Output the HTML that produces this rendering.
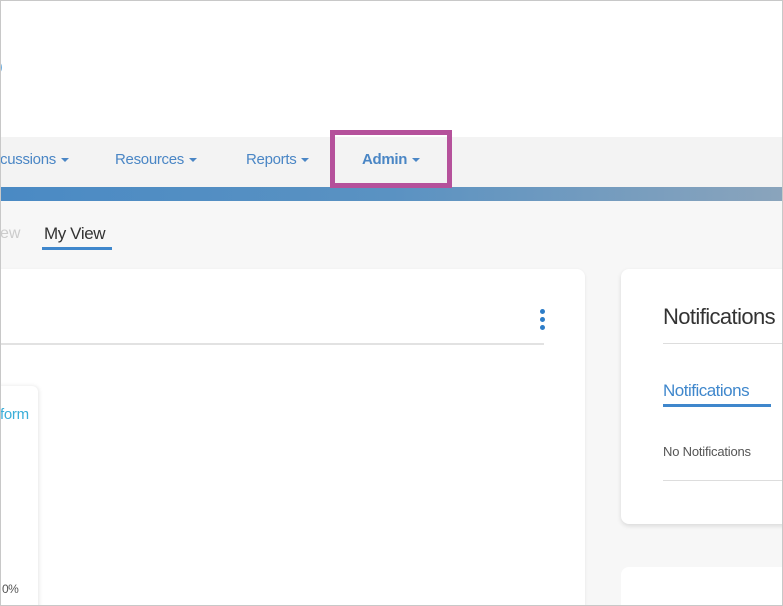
<!DOCTYPE html>
<html style="overflow:hidden;height:606px;width:783px"><head><style>
body{margin:0;width:783px;height:606px;overflow:hidden;background:#f7f7f7;font-family:"Liberation Sans",sans-serif;position:relative;}
.a{position:absolute;}
.nav{font-size:15px;color:#4a86c5;top:151px;letter-spacing:-0.3px}
.car{display:inline-block;width:0;height:0;border-left:4px solid transparent;border-right:4px solid transparent;border-top:4px solid #4a86c5;vertical-align:middle;margin-left:5px;}
</style></head><body>
<div class="a" style="left:0;top:0;width:783px;height:137px;background:#fff"></div>
<div class="a" style="left:0;top:137px;width:783px;height:50px;background:#f3f3f3"></div>
<div class="a" style="left:0;top:187px;width:783px;height:14px;background:linear-gradient(90deg,#4a8ac4,#5a92c2 50%,#8aa4bc)"></div>
<div class="a" style="left:-2px;top:58px;color:#4a9ad8;font-size:14px">)</div>
<div class="a nav" style="left:0">cussions<span class="car"></span></div>
<div class="a nav" style="left:115px">Resources<span class="car"></span></div>
<div class="a nav" style="left:246px">Reports<span class="car"></span></div>
<div class="a nav" style="left:362px;font-weight:bold">Admin<span class="car"></span></div>
<div class="a" style="left:330px;top:130px;width:112px;height:48px;border:5px solid #b5519b"></div>
<div class="a" style="left:0;top:225px;font-size:16px;color:#ccc">ew</div>
<div class="a" style="left:44px;top:224px;font-size:17px;color:#333;letter-spacing:-0.4px">My View</div>
<div class="a" style="left:42px;top:247px;width:70px;height:3px;background:#3f87cc"></div>
<div class="a" style="left:-10px;top:269px;width:595px;height:350px;background:#fff;border-radius:8px;box-shadow:0 1px 3px rgba(0,0,0,.08)"></div>
<div class="a" style="left:0;top:343px;width:544px;height:2px;background:#e2e2e2"></div>
<div class="a" style="left:540px;top:309px;width:5px;height:5px;border-radius:50%;background:#2d7dc8;box-shadow:0 8px 0 #2d7dc8,0 16px 0 #2d7dc8"></div>
<div class="a" style="left:-10px;top:386px;width:48px;height:230px;background:#fff;border-radius:6px;box-shadow:1px 0 4px rgba(0,0,0,.1)"></div>
<div class="a" style="left:0;top:406px;font-size:15px;color:#3aaed8;letter-spacing:-0.3px">form</div>
<div class="a" style="left:2px;top:582px;font-size:12px;color:#555;letter-spacing:-0.5px">0%</div>
<div class="a" style="left:621px;top:269px;width:180px;height:255px;background:#fff;border-radius:8px;box-shadow:0 2px 5px rgba(0,0,0,.12)"></div>
<div class="a" style="left:663px;top:304px;font-size:22px;color:#333;letter-spacing:-0.6px;white-space:nowrap">Notifications</div>
<div class="a" style="left:663px;top:343px;width:120px;height:1px;background:#ddd"></div>
<div class="a" style="left:663px;top:381px;font-size:17px;color:#3f87cc;letter-spacing:-0.5px">Notifications</div>
<div class="a" style="left:663px;top:404px;width:108px;height:3px;background:#3f87cc"></div>
<div class="a" style="left:663px;top:444px;font-size:13px;color:#555;letter-spacing:-0.2px">No Notifications</div>
<div class="a" style="left:663px;top:480px;width:120px;height:1px;background:#ddd"></div>
<div class="a" style="left:621px;top:567px;width:180px;height:60px;background:#fff;border-radius:8px"></div>
<div class="a" style="left:0;top:0;width:781px;height:604px;border:1px solid #c8c8c8"></div>
</body></html>
